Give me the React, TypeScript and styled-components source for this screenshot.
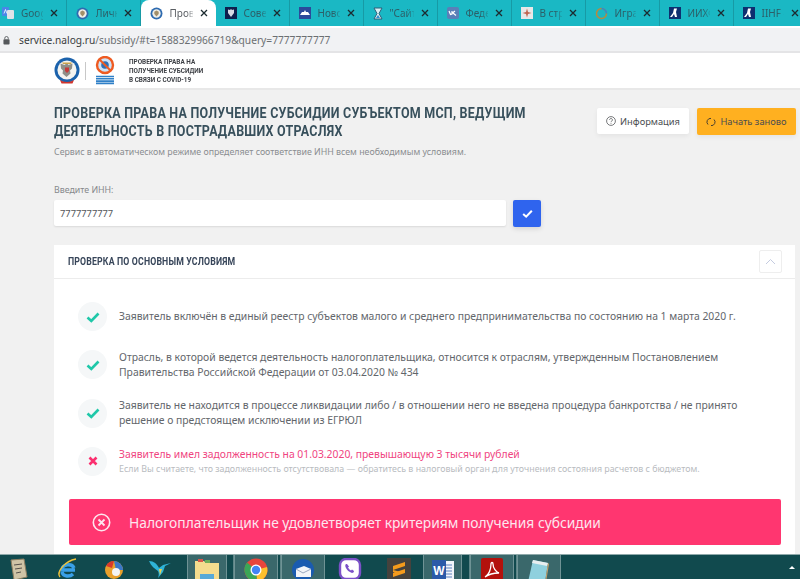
import React from 'react';
import styled, { createGlobalStyle } from 'styled-components';

const GlobalStyle = createGlobalStyle`
    html, body {
        margin: 0;
        padding: 0;
        width: 800px;
        height: 579px;
        overflow: hidden;
        background: #f1f1f1;
        font-family: "Noto Sans", "Open Sans", sans-serif;
    }
    * { box-sizing: border-box; }
`;

const Screen = styled.div`
    width: 800px;
    height: 579px;
    display: flex;
    flex-direction: column;
    overflow: hidden;
`;

const TabStrip = styled.div`
    height: 26px;
    flex: none;
    background: #1ab8c4;
    display: flex;
    overflow: hidden;
`;

const Tab = styled.div<{ $active?: boolean; $first?: boolean }>`
    flex: none;
    width: ${p => (p.$first ? '66.5px' : p.$active ? '75px' : '74px')};
    height: 26px;
    padding: ${p => (p.$first ? '0 8px 0 2px' : '0 8px 0 9px')};
    display: flex;
    align-items: center;
    gap: 7px;
    font-size: 10px;
    color: ${p => (p.$active ? '#5a5e63' : '#2c5f68')};
    background: ${p => (p.$active ? '#fff' : 'transparent')};
    border-radius: ${p => (p.$active ? '8px 8px 0 0' : '0')};
    border-right: ${p => (p.$active ? 'none' : '1px solid #179aa5')};

    svg { flex: none; }
`;

const TabLabel = styled.span`
    flex: 1;
    min-width: 0;
    white-space: nowrap;
    -webkit-mask-image: linear-gradient(90deg, #000 70%, rgba(0, 0, 0, 0.25) 100%);
    mask-image: linear-gradient(90deg, #000 70%, rgba(0, 0, 0, 0.25) 100%);
`;

const UrlBar = styled.div`
    height: 27px;
    flex: none;
    background: #f1f2f4;
    border-top: 2px solid #fff;
    border-bottom: 2px solid #e4e4e6;
    display: flex;
    align-items: center;
    gap: 9px;
    padding-left: 3px;
    font-size: 10.2px;
    color: #6b6f72;
    b { font-weight: 400; color: #3a3d40; }
`;

const SiteHeader = styled.div`
    height: 37px;
    flex: none;
    background: #fff;
    border-bottom: 2px solid #e8e8e8;
    display: flex;
    align-items: center;
    padding-left: 54px;
`;

const LogoDivider = styled.div`
    width: 1px;
    height: 18px;
    background: #c8c8c8;
    margin: 0 9px 0 5px;
`;

const LogoText = styled.div`
    margin-left: 14px;
    font-family: "Roboto", "Liberation Sans", sans-serif;
    font-size: 8px;
    line-height: 9.3px;
    font-weight: 700;
    white-space: nowrap;
    color: #3c3f44;
    transform: scaleX(0.8);
    transform-origin: left center;
`;

const Main = styled.div`
    flex: 1;
    min-height: 0;
    padding: 14px 0 0 54px;
    display: flex;
    flex-direction: column;
`;

const TitleRow = styled.div`
    display: flex;
    justify-content: space-between;
    align-items: flex-start;
    padding-right: 4px;
    height: 80px;
`;

const TitleBlock = styled.div`
    width: 520px;
`;

const Title = styled.h1`
    margin: 0;
    font-family: "Roboto", "Liberation Sans", sans-serif;
    font-size: 15.5px;
    line-height: 18px;
    font-weight: 700;
    letter-spacing: 0.3px;
    white-space: nowrap;
    color: #38505c;
    transform: scaleX(0.805);
    transform-origin: left center;
`;

const Subtitle = styled.p`
    margin: 6px 0 0;
    font-size: 8.8px;
    line-height: 12px;
    color: #8a8d90;
`;

const TitleActions = styled.div`
    display: flex;
    gap: 8px;
    padding-top: 4px;
`;

const ActionButton = styled.div<{ $primary?: boolean }>`
    height: ${p => (p.$primary ? '27px' : '26px')};
    display: flex;
    align-items: center;
    justify-content: center;
    gap: 4px;
    width: ${p => (p.$primary ? '99px' : '92px')};
    font-size: 9.3px;
    color: #4a4d50;
    background: ${p => (p.$primary ? '#ffb020' : '#fff')};
    border-radius: 2px;
    box-shadow: 0 2px 5px rgba(0, 0, 0, 0.06);
`;

const FieldLabel = styled.div`
    font-size: 8.8px;
    line-height: 12px;
    color: #85888b;
    margin-bottom: 4px;
`;

const InputRow = styled.div`
    display: flex;
    gap: 7px;
`;

const InnInput = styled.div`
    width: 452px;
    height: 26px;
    padding-left: 6px;
    display: flex;
    align-items: center;
    font-size: 9.3px;
    color: #55585b;
    background: #fff;
    border-radius: 2px;
    box-shadow: 0 1px 2px rgba(0, 0, 0, 0.1);
`;

const SubmitButton = styled.div`
    width: 28px;
    height: 27px;
    display: flex;
    align-items: center;
    justify-content: center;
    background: #2f64ee;
    border-radius: 2px;
    box-shadow: 0 2px 5px rgba(0, 0, 0, 0.12);
`;

const Card = styled.div`
    margin-top: 18px;
    width: 741px;
    flex: 1;
    background: #fff;
`;

const CardHeader = styled.div`
    height: 34px;
    display: flex;
    align-items: center;
    justify-content: space-between;
    padding: 0 13px 0 14px;
    border-bottom: 1px solid #ececec;
`;

const CardTitle = styled.div`
    font-family: "Roboto", "Liberation Sans", sans-serif;
    font-size: 10.5px;
    font-weight: 700;
    letter-spacing: 0.2px;
    white-space: nowrap;
    color: #38465a;
    transform: scaleX(0.83);
    transform-origin: left center;
`;

const CollapseButton = styled.div`
    width: 23px;
    height: 23px;
    display: flex;
    align-items: center;
    justify-content: center;
    border: 1px solid #eeeeee;
    border-radius: 2px;
`;

const CardBody = styled.div`
    padding: 22.5px 15px 0;
`;

const Condition = styled.div`
    display: flex;
    align-items: center;
    gap: 12px;
    height: 30px;
    margin-bottom: 18.3px;
`;

const StatusDot = styled.div`
    flex: none;
    width: 29px;
    height: 29px;
    margin-left: 9px;
    border-radius: 50%;
    background: #f5f7f8;
    display: flex;
    align-items: center;
    justify-content: center;
`;

const ConditionText = styled.div<{ $failed?: boolean }>`
    font-size: 10.37px;
    line-height: 15px;
    white-space: nowrap;
    color: ${p => (p.$failed ? '#f0457f' : '#62666b')};
`;

const ConditionHint = styled.div`
    font-size: 8.85px;
    line-height: 14px;
    white-space: nowrap;
    color: #b9bcbf;
`;

const Alert = styled.div`
    height: 46px;
    width: 712px;
    margin-top: 23px;
    padding-left: 23px;
    display: flex;
    align-items: center;
    gap: 18px;
    background: #ff3670;
    border-radius: 2px;
    color: #fde6ee;
    font-size: 13.8px;
`;

const Taskbar = styled.div`
    height: 25px;
    flex: none;
    background: #114a4e;
    border-top: 1px solid #8fa9aa;
    display: flex;
    align-items: center;
    position: relative;
    overflow: hidden;
`;

const TaskSlot = styled.div<{ $w: number; $box?: boolean }>`
    flex: none;
    width: ${p => p.$w}px;
    height: 24px;
    display: flex;
    justify-content: center;
    align-items: flex-start;
    padding-top: 3px;
    background: ${p => (p.$box ? '#3a686b' : 'transparent')};
    border-left: ${p => (p.$box ? '1px solid #6f9395' : 'none')};
    border-right: ${p => (p.$box ? '1px solid #6f9395' : 'none')};
`;

const TaskGap = styled.div<{ $w: number }>`
    flex: none;
    width: ${p => p.$w}px;
    height: 24px;
    border-right: 1px solid #5d8587;
`;

const TrayArrow = styled.div`
    position: absolute;
    right: 5px;
    top: 11px;
    width: 0;
    height: 0;
    border-left: 3px solid transparent;
    border-right: 3px solid transparent;
    border-bottom: 3px solid #fff;
`;

const Check = ({ c = '#1fc8a9', s = 14 }: { c?: string; s?: number }) => (
    <svg width={s} height={s} viewBox="0 0 14 14">
        <path d="M1.500 7.500 5.300 11 12.500 3.500" fill="none" stroke={c} strokeWidth="2.600" />
    </svg>
);

const Cross = () => (
    <svg width="10" height="10" viewBox="0 0 10 10">
        <path d="M1.500 1.500 8.500 8.500M8.500 1.500 1.500 8.500" stroke="#fb2f6f" strokeWidth="2.600" />
    </svg>
);

const TabCloseIcon = () => (
    <svg width="8" height="8" viewBox="0 0 8 8">
        <path d="M1 1 7 7M7 1 1 7" stroke="#1c2b30" strokeWidth="1.300" />
    </svg>
);

const Emblem = () => (
    <svg width="26" height="28" viewBox="0 0 26 28">
        <circle cx="13" cy="13" r="12.500" fill="#1b62ac" />
        <circle cx="13" cy="13" r="9.600" fill="#f4f4f0" />
        <path d="M13 6l1.500 2 4-1.500-.5 5-2 2 .5 3-4 3.500-4-3.500.5-3-2-2-.5-5 4 1.500z" fill="#8f8f88" />
        <path d="M11 10.500h4v3.500l-2 2-2-2z" fill="#c63a3a" />
        <path d="M8 5.500h10l-1 1.500H9z" fill="#c9a24b" />
        <path d="M6 23c4 2.500 10 2.500 14 0l-1.500 3.500h-11z" fill="#d0342c" />
    </svg>
);

const CovidLogo = () => (
    <svg width="20" height="30" viewBox="0 0 20 30">
        <circle cx="10" cy="9" r="8" fill="#cfe2f5" stroke="#ef5b22" strokeWidth="2.400" />
        <circle cx="10" cy="9" r="3.800" fill="#2f6fb5" />
        <path d="M4.500 3.500 15.500 14.500" stroke="#ef5b22" strokeWidth="2" />
        <path d="M1 20.500h18M1 22.800h18M1 25.100h18M1 27.400h18" stroke="#2f80c8" strokeWidth="1.600" />
    </svg>
);

const LockIcon = () => (
    <svg width="7" height="10" viewBox="0 0 8 10">
        <rect x="0.500" y="4" width="7" height="6" rx="1" fill="#55585b" />
        <path d="M2 4V3a2 2 0 0 1 4 0v1" fill="none" stroke="#55585b" />
    </svg>
);

const Favicon = ({ kind }: { kind: string }) => {
    if (kind === 'google') {
        return (
            <svg width="12" height="12" viewBox="0 0 12 12">
                <rect width="7" height="9" rx="1" fill="#4a86e8" />
                <rect x="5" y="3" width="7" height="9" rx="1" fill="#dfe3e8" />
                <path d="M2 6.500l1.500-4 1.500 4" fill="none" stroke="#fff" strokeWidth="0.800" />
            </svg>
        );
    }
    if (kind === 'nalog') {
        return (
            <svg width="13" height="13" viewBox="0 0 13 13">
                <circle cx="6.500" cy="6.500" r="6" fill="#2e6bb0" />
                <circle cx="6.500" cy="6.500" r="4.200" fill="#f1efe8" />
                <path d="M6.500 3.500l2.200 1.200v2.300L6.500 9.500 4.300 7V4.700z" fill="#a28f6a" />
            </svg>
        );
    }
    if (kind === 'sovet') {
        return (
            <svg width="12" height="12" viewBox="0 0 12 12">
                <rect width="12" height="12" fill="#0e1f4d" />
                <path d="M6 2l1 1 2-.5V6L6 10 3 6V2.500L5 3z" fill="#d8dbe4" />
            </svg>
        );
    }
    if (kind === 'news') {
        return (
            <svg width="12" height="12" viewBox="0 0 12 12">
                <rect width="12" height="12" fill="#2b4a9b" />
                <path d="M1 8h10L9 5H7L6 3 5 5H3z" fill="#fff" />
            </svg>
        );
    }
    if (kind === 'hourglass') {
        return (
            <svg width="10" height="13" viewBox="0 0 10 13">
                <path d="M1 1h8L6 6.500 9 12H1l3-5.500z" fill="#d9eef2" stroke="#2d5f7a" />
                <path d="M3 11h4L5 8z" fill="#2f8fd0" />
            </svg>
        );
    }
    if (kind === 'vk') {
        return (
            <svg width="12" height="12" viewBox="0 0 12 12">
                <rect width="12" height="12" rx="2" fill="#5a7fb8" />
                <path d="M2 4l1.500 3.500L5 7V4M5.500 6 8 4M6 6l3 2.500" fill="none" stroke="#fff" strokeWidth="1.200" />
            </svg>
        );
    }
    if (kind === 'map') {
        return (
            <svg width="12" height="12" viewBox="0 0 12 12">
                <rect width="12" height="12" fill="#e8e8e8" />
                <path d="M6 1.500 7 5l3.500 1L7 7l-1 3.500L5 7 1.500 6 5 5z" fill="#c0654f" />
            </svg>
        );
    }
    if (kind === 'ring') {
        return (
            <svg width="13" height="13" viewBox="0 0 13 13">
                <circle cx="6.500" cy="6.500" r="5" fill="none" stroke="#b78a3d" strokeWidth="1.500" />
                <path d="M6.500 1.500a5 5 0 0 1 5 5" fill="none" stroke="#2e8bd0" strokeWidth="1.500" />
            </svg>
        );
    }
    return (
        <svg width="12" height="12" viewBox="0 0 12 12">
            <rect width="12" height="12" fill="#0d2f70" />
            <path d="M5 1.500h3L7 5l1 5H6L5 7 3 10H1l3-4z" fill="#fff" />
        </svg>
    );
};

const tabs = [
    { kind: 'google', label: 'Googl', first: true },
    { kind: 'nalog', label: 'Личн' },
    { kind: 'nalog', label: 'Пров', active: true },
    { kind: 'sovet', label: 'Сове' },
    { kind: 'news', label: 'Ново' },
    { kind: 'hourglass', label: '"Сайт' },
    { kind: 'vk', label: 'Феде' },
    { kind: 'map', label: 'В стр' },
    { kind: 'ring', label: 'Игра' },
    { kind: 'iihf', label: 'ИИХФ' },
    { kind: 'iihf', label: 'IIHF -' },
];

const TaskIcon = ({ kind }: { kind: string }) => {
    switch (kind) {
        case 'ie':
            return (
                <svg width="24" height="22" viewBox="0 0 24 22">
                    <path d="M20 12H7c0-6 10-7 12-2M7 14c1 5 8 5 11 2" fill="none" stroke="#3aa0e8" strokeWidth="3.400" />
                    <path d="M5 19C1 14 10 3 21 1" fill="none" stroke="#f0c33c" strokeWidth="1.400" />
                </svg>
            );
        case 'globe':
            return (
                <svg width="20" height="22" viewBox="0 0 20 22">
                    <circle cx="10" cy="12" r="9" fill="#e8a02c" />
                    <path d="M10 3a9 9 0 0 1 9 9h-7z" fill="#3a78c8" />
                    <path d="M2 8a9 9 0 0 1 8-5l-2 7z" fill="#d83a2c" />
                    <circle cx="12" cy="14" r="4" fill="#f4f4f4" />
                </svg>
            );
        case 'bird':
            return (
                <svg width="24" height="22" viewBox="0 0 24 22">
                    <path d="M1 3c5 0 8 3 10 7l4-3 8-2-6 3-2 6-5 6c1-3 1-5 0-7C7 11 3 8 1 3z" fill="#2fb4d8" />
                    <path d="M11 11l3 0-2 6z" fill="#f2d048" />
                </svg>
            );
        case 'folder':
            return (
                <svg width="26" height="23" viewBox="0 0 26 23">
                    <path d="M1 3h9l2 2h13v18H1z" fill="#f4dc8e" />
                    <rect x="4" y="1" width="5" height="3" fill="#d9574a" />
                    <rect x="11" y="2" width="5" height="3" fill="#6cae5a" />
                    <rect x="6" y="16" width="14" height="7" fill="#56a9d8" />
                </svg>
            );
        case 'chrome':
            return (
                <svg width="24" height="24" viewBox="0 0 24 24">
                    <circle cx="12" cy="12" r="11.500" fill="#e8453c" />
                    <path d="M12 12 1.800 17A11.500 11.500 0 0 1 3 4.500z" fill="#3aa757" />
                    <path d="M12 12 23 9a11.500 11.500 0 0 1-10 14.500L12 12z" fill="#fbc02d" />
                    <path d="M12 12 1.500 16.500A11.500 11.500 0 0 0 13 23.500z" fill="#3aa757" />
                    <circle cx="12" cy="12" r="5.500" fill="#fff" />
                    <circle cx="12" cy="12" r="4.200" fill="#4285f4" />
                </svg>
            );
        case 'mail':
            return (
                <svg width="24" height="24" viewBox="0 0 24 24">
                    <circle cx="12" cy="12" r="11" fill="#1a5bb0" />
                    <path d="M5 11l8-3 7 3v8H5z" fill="#f2f4f8" />
                    <path d="M5 11l7 4 8-4" fill="none" stroke="#9aa8c0" />
                </svg>
            );
        case 'viber':
            return (
                <svg width="24" height="24" viewBox="0 0 24 24">
                    <rect x="2" y="1" width="20" height="20" rx="6" fill="#fff" stroke="#7b51c8" strokeWidth="2.400" />
                    <path d="M7 21v3l4-3z" fill="#7b51c8" />
                    <path d="M8 6c-1 1-1 2 0 4 1 2 3 4 6 5 1 0 2-1 2-2l-2-1.500-1 1c-1-.5-2-1.500-3-3l1-1L9 6z" fill="#7b51c8" />
                </svg>
            );
        case 'sublime':
            return (
                <svg width="24" height="24" viewBox="0 0 24 24">
                    <rect width="24" height="24" fill="#45423d" />
                    <path d="M6 8l12-4v4L6 12zM18 11v4L6 19v-4zM6 12l12 3-4 1-8-2z" fill="#f59b1c" />
                </svg>
            );
        case 'word':
            return (
                <svg width="24" height="24" viewBox="0 0 24 24">
                    <rect x="12" y="3" width="11" height="21" fill="#f2f5fa" />
                    <path d="M14 7h7M14 10h7M14 13h7M14 16h7M14 19h7" stroke="#5a80bd" />
                    <rect x="1" y="2" width="14" height="22" fill="#2b5aa8" />
                    <text x="8" y="17" textAnchor="middle" fontSize="12" fontWeight="700" fill="#fff" fontFamily="Liberation Sans">W</text>
                </svg>
            );
        case 'pdf':
            return (
                <svg width="22" height="24" viewBox="0 0 22 24">
                    <rect width="22" height="24" rx="2" fill="#b3110c" />
                    <path d="M4 19c4-2 6-8 6-13 0-2 2-2 2 0 0 4 3 8 6 9-4 0-10 1-14 4z" fill="none" stroke="#fff" strokeWidth="1.300" />
                </svg>
            );
        case 'note':
            return (
                <svg width="24" height="24" viewBox="0 0 24 24">
                    <path d="M6 2l15 3-3 19H1z" fill="#8fd0de" />
                    <path d="M6 2l15 3-1 3L5 5z" fill="#e8eef0" />
                    <path d="M21 5l1 1-3 18h-1z" fill="#c9a06a" />
                </svg>
            );
        default:
            return (
                <svg width="22" height="22" viewBox="0 0 22 22">
                    <path d="M3 2l13-1 3 18-13 3z" fill="#cfc4a6" stroke="#8c7d5f" />
                    <path d="M6 7l8-1M7 11l7-1M8 15l5-1" stroke="#55504a" />
                </svg>
            );
    }
};

const taskbarSlots = [
    { kind: 'paper', w: 38 },
    { kind: 'ie', w: 58 },
    { kind: 'globe', w: 36 },
    { kind: 'bird', w: 55 },
    { kind: 'folder', w: 40, box: true },
    { kind: 'chrome', w: 44, box: true, gap: 7 },
    { kind: 'mail', w: 44, box: true, gap: 3 },
    { kind: 'viber', w: 50 },
    { kind: 'sublime', w: 48 },
    { kind: 'word', w: 39, box: true },
    { kind: 'pdf', w: 44, box: true, gap: 8 },
    { kind: 'note', w: 44, box: true, gap: 3 },
];

const App = () => {
    return (
        <Screen>
            <GlobalStyle />
            <TabStrip>
                {tabs.map(t => (
                    <Tab key={t.label} $active={t.active} $first={t.first}>
                        <Favicon kind={t.kind} />
                        <TabLabel>{t.label}</TabLabel>
                        <TabCloseIcon />
                    </Tab>
                ))}
            </TabStrip>
            <UrlBar>
                <LockIcon />
                <span><b>service.nalog.ru</b>/subsidy/#t=1588329966719&amp;query=7777777777</span>
            </UrlBar>
            <SiteHeader>
                <Emblem />
                <LogoDivider />
                <CovidLogo />
                <LogoText>
                    ПРОВЕРКА ПРАВА НА<br />
                    ПОЛУЧЕНИЕ СУБСИДИИ<br />
                    В СВЯЗИ С COVID-19
                </LogoText>
            </SiteHeader>
            <Main>
                <TitleRow>
                    <TitleBlock>
                        <Title>
                            ПРОВЕРКА ПРАВА НА ПОЛУЧЕНИЕ СУБСИДИИ СУБЪЕКТОМ МСП, ВЕДУЩИМ<br />
                            ДЕЯТЕЛЬНОСТЬ В ПОСТРАДАВШИХ ОТРАСЛЯХ
                        </Title>
                        <Subtitle>Сервис в автоматическом режиме определяет соответствие ИНН всем необходимым условиям.</Subtitle>
                    </TitleBlock>
                    <TitleActions>
                        <ActionButton>
                            <svg width="10" height="10" viewBox="0 0 10 10">
                                <circle cx="5" cy="5" r="4.400" fill="none" stroke="#55585b" strokeWidth="0.800" />
                                <path d="M3.600 3.800a1.400 1.400 0 1 1 2.200 1.200c-.6.4-.8.6-.8 1.200M5 7.300v.7" fill="none" stroke="#55585b" strokeWidth="0.800" />
                            </svg>
                            Информация
                        </ActionButton>
                        <ActionButton $primary>
                            <svg width="10" height="10" viewBox="0 0 10 10">
                                <path d="M2 7.500A3.600 3.600 0 0 1 5 1.400M8 2.500A3.600 3.600 0 0 1 5 8.600" fill="none" stroke="#4a4030" strokeWidth="1" />
                            </svg>
                            Начать заново
                        </ActionButton>
                    </TitleActions>
                </TitleRow>
                <FieldLabel>Введите ИНН:</FieldLabel>
                <InputRow>
                    <InnInput>7777777777</InnInput>
                    <SubmitButton><Check c="#fff" s={11} /></SubmitButton>
                </InputRow>
                <Card>
                    <CardHeader>
                        <CardTitle>ПРОВЕРКА ПО ОСНОВНЫМ УСЛОВИЯМ</CardTitle>
                        <CollapseButton>
                            <svg width="11" height="7" viewBox="0 0 11 7">
                                <path d="M1 6l4.500-4.500L10 6" fill="none" stroke="#c4cbe0" />
                            </svg>
                        </CollapseButton>
                    </CardHeader>
                    <CardBody>
                        <Condition>
                            <StatusDot><Check /></StatusDot>
                            <ConditionText>Заявитель включён в единый реестр субъектов малого и среднего предпринимательства по состоянию на 1 марта 2020 г.</ConditionText>
                        </Condition>
                        <Condition>
                            <StatusDot><Check /></StatusDot>
                            <ConditionText>
                                Отрасль, в которой ведется деятельность налогоплательщика, относится к отраслям, утвержденным Постановлением<br />
                                Правительства Российской Федерации от 03.04.2020 № 434
                            </ConditionText>
                        </Condition>
                        <Condition>
                            <StatusDot><Check /></StatusDot>
                            <ConditionText>
                                Заявитель не находится в процессе ликвидации либо / в отношении него не введена процедура банкротства / не принято<br />
                                решение о предстоящем исключении из ЕГРЮЛ
                            </ConditionText>
                        </Condition>
                        <Condition>
                            <StatusDot><Cross /></StatusDot>
                            <div>
                                <ConditionText $failed>Заявитель имел задолженность на 01.03.2020, превышающую 3 тысячи рублей</ConditionText>
                                <ConditionHint>Если Вы считаете, что задолженность отсутствовала — обратитесь в налоговый орган для уточнения состояния расчетов с бюджетом.</ConditionHint>
                            </div>
                        </Condition>
                        <Alert>
                            <svg width="19" height="19" viewBox="0 0 19 19">
                                <circle cx="9.500" cy="9.500" r="8.200" fill="none" stroke="#fde6ee" strokeWidth="1.600" />
                                <path d="M6.500 6.500l6 6M12.500 6.500l-6 6" stroke="#fde6ee" strokeWidth="1.800" />
                            </svg>
                            Налогоплательщик не удовлетворяет критериям получения субсидии
                        </Alert>
                    </CardBody>
                </Card>
            </Main>
            <Taskbar>
                {taskbarSlots.map(s => (
                    <React.Fragment key={s.kind}>
                        {s.gap ? <TaskGap $w={s.gap} /> : null}
                        <TaskSlot $w={s.w} $box={s.box}><TaskIcon kind={s.kind} /></TaskSlot>
                    </React.Fragment>
                ))}
                <TrayArrow />
            </Taskbar>
        </Screen>
    );
};

export default App;
